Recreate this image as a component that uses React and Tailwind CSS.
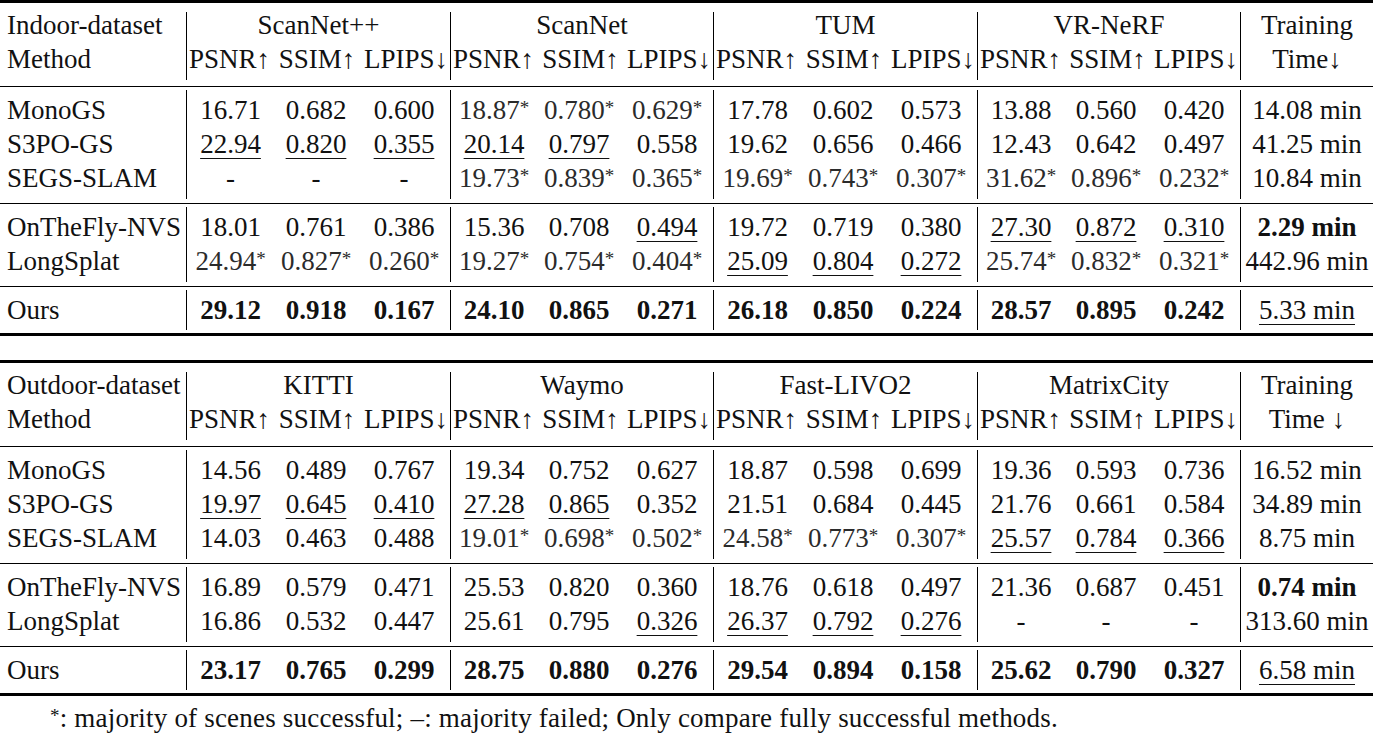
import React from 'react';
import clsx from 'clsx';

const GRID =
  'grid grid-cols-[186px_88px_84px_92px_87px_84px_92px_88px_84px_92px_87px_84px_92px_133px]';

const indoor = {
  name: 'Indoor-dataset',
  groups: ['ScanNet++', 'ScanNet', 'TUM', 'VR-NeRF'],
  timeGap: false,
  blocks: [
    [
      ['MonoGS', '16.71 0.682 0.600 18.87* 0.780* 0.629* 17.78 0.602 0.573 13.88 0.560 0.420', '14.08 min'],
      ['S3PO-GS', '_22.94 _0.820 _0.355 _20.14 _0.797 0.558 19.62 0.656 0.466 12.43 0.642 0.497', '41.25 min'],
      ['SEGS-SLAM', '- - - 19.73* 0.839* 0.365* 19.69* 0.743* 0.307* 31.62* 0.896* 0.232*', '10.84 min'],
    ],
    [
      ['OnTheFly-NVS', '18.01 0.761 0.386 15.36 0.708 _0.494 19.72 0.719 0.380 _27.30 _0.872 _0.310', '!2.29 min'],
      ['LongSplat', '24.94* 0.827* 0.260* 19.27* 0.754* 0.404* _25.09 _0.804 _0.272 25.74* 0.832* 0.321*', '442.96 min'],
    ],
    [['Ours', '29.12 0.918 0.167 24.10 0.865 0.271 26.18 0.850 0.224 28.57 0.895 0.242', '_5.33 min']],
  ],
};

const outdoor = {
  name: 'Outdoor-dataset',
  groups: ['KITTI', 'Waymo', 'Fast-LIVO2', 'MatrixCity'],
  timeGap: true,
  blocks: [
    [
      ['MonoGS', '14.56 0.489 0.767 19.34 0.752 0.627 18.87 0.598 0.699 19.36 0.593 0.736', '16.52 min'],
      ['S3PO-GS', '_19.97 _0.645 _0.410 _27.28 _0.865 0.352 21.51 0.684 0.445 21.76 0.661 0.584', '34.89 min'],
      ['SEGS-SLAM', '14.03 0.463 0.488 19.01* 0.698* 0.502* 24.58* 0.773* 0.307* _25.57 _0.784 _0.366', '8.75 min'],
    ],
    [
      ['OnTheFly-NVS', '16.89 0.579 0.471 25.53 0.820 0.360 18.76 0.618 0.497 21.36 0.687 0.451', '!0.74 min'],
      ['LongSplat', '16.86 0.532 0.447 25.61 0.795 _0.326 _26.37 _0.792 _0.276 - - -', '313.60 min'],
    ],
    [['Ours', '23.17 0.765 0.299 28.75 0.880 0.276 29.54 0.894 0.158 25.62 0.790 0.327', '_6.58 min']],
  ],
};

// values: leading "_" = underlined (second best), trailing "*" = partial success, "!" = bold
function Value({ v, bold }) {
  let text = v;
  let under = false;
  let strong = bold;
  if (text.startsWith('!')) {
    strong = true;
    text = text.slice(1);
  }
  if (text.startsWith('_')) {
    under = true;
    text = text.slice(1);
  }
  const star = text.endsWith('*');
  if (star) text = text.slice(0, -1);
  return (
    <span className={clsx('whitespace-nowrap', strong && 'font-bold', star && 'text-[#2b2b2b]')}>
      <span className={clsx(under && 'underline decoration-1 underline-offset-[5px]')}>{text}</span>
      {star && <span className="relative -top-[5px] text-[19px] leading-none">*</span>}
    </span>
  );
}

function Rule({ thick }) {
  return <div className={clsx('w-full bg-black', thick ? 'h-[2.5px]' : 'h-px')} />;
}

function Header({ t }) {
  return (
    <div className="mt-[5px] mb-[6px] grid grid-cols-[186px_264px_263px_264px_263px_133px] leading-[34px]">
      <div className="flex flex-col pb-[4px] pl-[7px]">
        <span className="whitespace-nowrap">{t.name}</span>
        <span>Method</span>
      </div>
      {t.groups.map((g) => (
        <div key={g} className="mt-[4.5px] flex flex-col border-l border-black pb-[4px]">
          <span className="-mt-[4.5px] text-center">{g}</span>
          <div className="flex justify-between px-[2px] whitespace-nowrap">
            <span>PSNR↑</span>
            <span>SSIM↑</span>
            <span>LPIPS↓</span>
          </div>
        </div>
      ))}
      <div className="mt-[4.5px] flex flex-col items-center border-l border-black pb-[4px]">
        <span className="-mt-[4.5px]">Training</span>
        <span className={clsx('flex whitespace-nowrap', t.timeGap && 'gap-[7px]')}>
          <span>Time</span>
          <span className="text-[#111]">↓</span>
        </span>
      </div>
    </div>
  );
}

function Block({ rows, bold, outer, inner }) {
  const cells = rows.map((r) => r[1].split(' '));
  const pad = clsx('flex flex-col', inner);
  return (
    <div className={clsx(GRID, outer, 'leading-[34px]')}>
      <div className={clsx(pad, 'pl-[7px] whitespace-nowrap')}>
        {rows.map((r) => (
          <span key={r[0]}>{r[0]}</span>
        ))}
      </div>
      {Array.from({ length: 12 }).map((_, c) => (
        <div key={c} className={clsx(pad, 'items-center', c % 3 === 0 && 'border-l border-black')}>
          {cells.map((vals, i) => (
            <Value key={i} v={vals[c]} bold={bold} />
          ))}
        </div>
      ))}
      <div className={clsx(pad, 'items-center border-l border-black')}>
        {rows.map((r) => (
          <Value key={r[0]} v={r[2]} />
        ))}
      </div>
    </div>
  );
}

function ResultTable({ t }) {
  return (
    <div>
      <Rule thick />
      <Header t={t} />
      <Rule />
      <Block rows={t.blocks[0]} outer="mt-[3px] mb-[4px]" inner="pt-[3px] pb-[4px]" />
      <Rule />
      <Block rows={t.blocks[1]} outer="mt-[3px] mb-[4px]" inner="pt-[3px] pb-[4px]" />
      <Rule />
      <Block rows={t.blocks[2]} bold outer="mt-[3px] mb-[3.5px]" inner="pt-[3px] pb-[3px]" />
      <Rule thick />
    </div>
  );
}

export default function App() {
  return (
    <div className="w-[1373px] h-[739px] overflow-hidden bg-white text-[27px] text-[#111] font-['Liberation_Serif',serif]">
      <ResultTable t={indoor} />
      <div className="h-[24.5px]" />
      <ResultTable t={outdoor} />
      <p className="mt-[5px] pl-[50px] leading-[34px] tracking-[0.2px] whitespace-nowrap">
        <span className="relative -top-[5px] text-[19px] leading-none">*</span>: majority of scenes successful; –:
        majority failed; Only compare fully successful methods.
      </p>
    </div>
  );
}
